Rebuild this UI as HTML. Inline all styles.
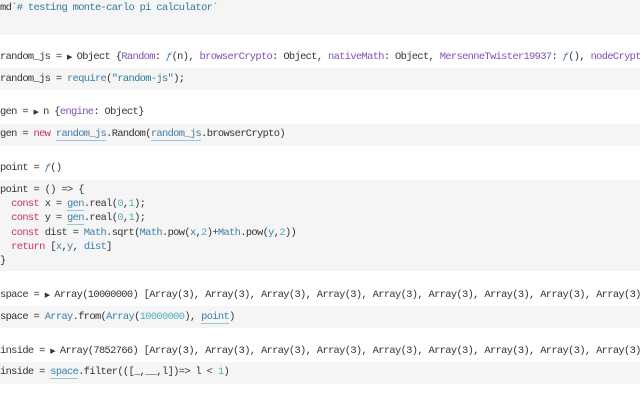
<!DOCTYPE html>
<html><head><meta charset="utf-8"><style>
html,body{margin:0;padding:0;width:640px;height:400px;overflow:hidden;background:#fff}
body{font-family:"Liberation Mono",monospace;font-size:10.4px;letter-spacing:-0.65px;color:#333;position:relative}
.bg{position:absolute;left:0;width:640px;background:#f5f5f5}
.l{position:absolute;left:0;white-space:pre;line-height:12px}
.k{color:#c8306b}.p{color:#7d4fb8}.b{color:#3b7ea8}.n{color:#4eb0ba}.s{color:#2f7a99}
.u{color:#3b7ea8;border-bottom:1px solid #9cc3d3}
.t{font-size:7px;color:#333;letter-spacing:0}
</style></head><body>
<div class="bg" style="top:0;height:35px"></div>
<div class="bg" style="top:68px;height:22px"></div>
<div class="bg" style="top:124px;height:22px"></div>
<div class="bg" style="top:180px;height:91px"></div>
<div class="bg" style="top:306px;height:22px"></div>
<div class="bg" style="top:362px;height:22px"></div>

<div class="l" style="top:2px">md`<span class="s"># testing monte-carlo pi calculator</span><span class="b">`</span></div>

<div class="l" style="top:51px">random_js = <span class="t">▶ </span>Object {<span class="p">Random</span>: <span class="b"><i>ƒ</i></span>(n), <span class="p">browserCrypto</span>: Object, <span class="p">nativeMath</span>: Object, <span class="p">MersenneTwister19937</span>: <span class="b"><i>ƒ</i></span>(), <span class="p">nodeCrypto</span></div>
<div class="l" style="top:73px">random_js = <span class="b">require</span>(<span class="s">"random-js"</span>);</div>

<div class="l" style="top:106px">gen = <span class="t">▶ </span>n {<span class="p">engine</span>: Object}</div>
<div class="l" style="top:128px">gen = <span class="k">new</span> <span class="u">random_js</span>.Random(<span class="u">random_js</span>.browserCrypto)</div>

<div class="l" style="top:162px">point = <span class="b"><i>ƒ</i></span>()</div>
<div class="l" style="top:184px">point = () =&gt; {</div>
<div class="l" style="top:198px">  <span class="k">const</span> x = <span class="u">gen</span>.real(<span class="n">0</span>,<span class="n">1</span>);</div>
<div class="l" style="top:212px">  <span class="k">const</span> y = <span class="u">gen</span>.real(<span class="n">0</span>,<span class="n">1</span>);</div>
<div class="l" style="top:227px">  <span class="k">const</span> dist = <span class="b">Math</span>.sqrt(<span class="b">Math</span>.pow(<span class="b">x</span>,<span class="n">2</span>)+<span class="b">Math</span>.pow(<span class="b">y</span>,<span class="n">2</span>))</div>
<div class="l" style="top:241px">  <span class="k">return</span> [<span class="b">x</span>,<span class="b">y</span>, <span class="b">dist</span>]</div>
<div class="l" style="top:255px">}</div>

<div class="l" style="top:289px">space = <span class="t">▶ </span>Array(10000000) [Array(3), Array(3), Array(3), Array(3), Array(3), Array(3), Array(3), Array(3), Array(3)</div>
<div class="l" style="top:311px">space = <span class="b">Array</span>.from(<span class="b">Array</span>(<span class="n">10000000</span>), <span class="u">point</span>)</div>

<div class="l" style="top:345px">inside = <span class="t">▶ </span>Array(7852766) [Array(3), Array(3), Array(3), Array(3), Array(3), Array(3), Array(3), Array(3), Array(3)</div>
<div class="l" style="top:366px">inside = <span class="u">space</span>.filter(([_,__,l])=&gt; l &lt; <span class="n">1</span>)</div>
</body></html>
